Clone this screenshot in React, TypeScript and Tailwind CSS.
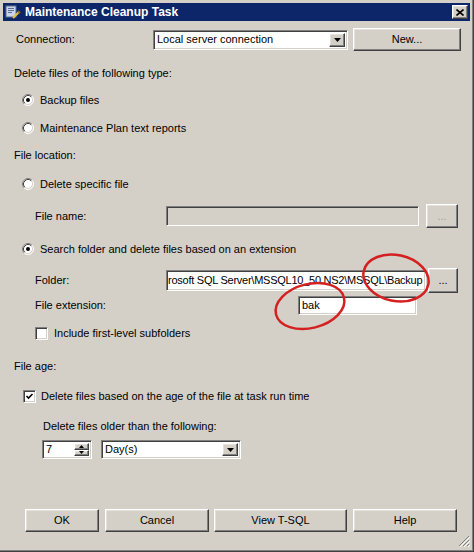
import React from "react";

/* ============================================================
   Maintenance Cleanup Task dialog (Windows classic look)
=============================================================== */

const raised =
  "bg-[#d4d0c8] border border-t-white border-l-white border-r-[#404040] border-b-[#404040] shadow-[inset_-1px_-1px_0_#808080,inset_1px_1px_0_#e4e2dc]";
const sunken =
  "border border-t-[#808080] border-l-[#808080] border-r-white border-b-white shadow-[inset_1px_1px_0_#404040,inset_-1px_-1px_0_#d4d0c8]";

const Radio: React.FC<{ checked?: boolean }> = ({ checked }) => (
  <svg width="12" height="12" viewBox="0 0 12 12" className="shrink-0">
    <circle cx="6" cy="6" r="5" fill="#fff" />
    <path d="M2.11 9.89 A5.5 5.5 0 0 1 9.89 2.11" stroke="#808080" strokeWidth="1" fill="none" />
    <path d="M9.89 2.11 A5.5 5.5 0 0 1 2.11 9.89" stroke="#fff" strokeWidth="1" fill="none" />
    <path d="M2.82 9.18 A4.5 4.5 0 0 1 9.18 2.82" stroke="#404040" strokeWidth="1" fill="none" />
    <path d="M9.18 2.82 A4.5 4.5 0 0 1 2.82 9.18" stroke="#d4d0c8" strokeWidth="1" fill="none" />
    {checked && <circle cx="6" cy="6" r="2" fill="#000" />}
  </svg>
);

const Check: React.FC<{ checked?: boolean }> = ({ checked }) => (
  <div className={`w-[13px] h-[13px] bg-white shrink-0 flex items-center justify-center ${sunken}`}>
    {checked && (
      <svg width="9" height="9" viewBox="0 0 9 9">
        <path d="M1.5 4 L3.5 6 L7.5 2" stroke="#000" strokeWidth="1.6" fill="none" />
      </svg>
    )}
  </div>
);

const Arrow: React.FC = () => (
  <div className={`w-[16px] h-full shrink-0 flex items-center justify-center ${raised}`}>
    <svg width="7" height="4" viewBox="0 0 7 4">
      <path d="M0 0 H7 L3.5 4 Z" fill="#000" />
    </svg>
  </div>
);

const Combo: React.FC<{ value: string; className: string }> = ({ value, className }) => (
  <div className={`bg-white flex items-stretch p-[2px] ${sunken} ${className}`}>
    <div className="flex-1 flex items-center pl-[1px] whitespace-nowrap">{value}</div>
    <Arrow />
  </div>
);

const Btn: React.FC<{ label: string; className: string; disabled?: boolean }> = ({
  label,
  className,
  disabled,
}) => (
  <div
    className={`flex items-center justify-center shrink-0 ${raised} ${className} ${
      disabled ? "text-[#a0a0a0]" : "text-black"
    }`}
  >
    {label}
  </div>
);

export default function App() {
  return (
    <div className="relative w-[474px] h-[552px] bg-[#d4d0c8] overflow-hidden font-['Liberation_Sans',Arial,sans-serif] text-[11px] text-black leading-none shadow-[inset_-1px_-1px_0_#404040,inset_-2px_-2px_0_#808080] flex flex-col">
      {/* ========================== TITLE BAR ============================== */}
      <div className="mx-[3px] mt-[3px] h-[18px] w-[467px] bg-[#0c2669] flex items-center">
        <svg width="16" height="16" viewBox="0 0 16 16" className="ml-[2px] shrink-0">
          <rect x="1" y="2" width="10" height="11" fill="#c8d4e8" stroke="#5a6e96" />
          <rect x="3" y="4" width="6" height="1" fill="#5a6e96" />
          <rect x="3" y="6" width="6" height="1" fill="#5a6e96" />
          <rect x="3" y="8" width="4" height="1" fill="#5a6e96" />
          <path d="M8 14 L14 8" stroke="#e8c040" strokeWidth="2" />
          <path d="M13 7 L15 9" stroke="#8a6a20" strokeWidth="2" />
        </svg>
        <span className="ml-[4px] text-white font-bold text-[12px]">Maintenance Cleanup Task</span>
        <div className={`ml-auto mr-[2px] w-[16px] h-[14px] flex items-center justify-center ${raised}`}>
          <svg width="8" height="7" viewBox="0 0 8 7">
            <path d="M0.5 0.5 L7.5 6.5 M7.5 0.5 L0.5 6.5" stroke="#000" strokeWidth="1.6" />
          </svg>
        </div>
      </div>

      {/* ========================== CONNECTION ============================== */}
      <div className="flex items-center mt-[7px] h-[23px]">
        <div className="ml-[16px] w-[137px]">Connection:</div>
        <Combo value="Local server connection" className="w-[195px] h-[20px]" />
        <Btn label="New..." className="ml-[5px] w-[108px] h-[23px]" />
      </div>

      {/* ========================== FILE TYPE ============================== */}
      <div className="flex items-center mt-[13px] h-[18px] ml-[14px]">Delete files of the following type:</div>
      <div className="flex items-center mt-[9px] h-[18px] ml-[22px] gap-[6px]">
        <Radio checked />
        <span>Backup files</span>
      </div>
      <div className="flex items-center mt-[10px] h-[18px] ml-[22px] gap-[6px]">
        <Radio />
        <span>Maintenance Plan text reports</span>
      </div>

      {/* ========================== FILE LOCATION ============================== */}
      <div className="flex items-center mt-[9px] h-[18px] ml-[14px]">File location:</div>
      <div className="flex items-center mt-[11px] h-[18px] ml-[22px] gap-[6px]">
        <Radio />
        <span>Delete specific file</span>
      </div>
      <div className="flex items-center mt-[11px] h-[24px]">
        <div className="ml-[35px] w-[131px]">File name:</div>
        <div className={`w-[253px] h-[20px] bg-[#d4d0c8] ${sunken}`} />
        <Btn label="..." disabled className="ml-[7px] w-[32px] h-[24px]" />
      </div>
      <div className="flex items-center mt-[12px] h-[18px] ml-[22px] gap-[6px]">
        <Radio checked />
        <span>Search folder and delete files based on an extension</span>
      </div>
      <div className="flex items-center mt-[10px] h-[25px]">
        <div className="ml-[35px] w-[131px]">Folder:</div>
        <div className={`w-[260px] h-[21px] bg-white flex items-center whitespace-nowrap pl-[1px] tracking-[-0.25px] ${sunken}`}>
          rosoft SQL Server\MSSQL10_50.NS2\MSSQL\Backup
        </div>
        <Btn label="..." className="ml-[2px] w-[30px] h-[25px]" />
      </div>
      <div className="flex items-center mt-[3px] h-[19px]">
        <div className="ml-[35px] w-[263px]">File extension:</div>
        <div className={`w-[119px] h-[19px] bg-white flex items-center pl-[3px] ${sunken}`}>bak</div>
      </div>
      <div className="flex items-center mt-[9px] h-[18px] ml-[35px] gap-[6px]">
        <Check />
        <span>Include first-level subfolders</span>
      </div>

      {/* ========================== FILE AGE ============================== */}
      <div className="flex items-center mt-[15px] h-[18px] ml-[14px]">File age:</div>
      <div className="flex items-center mt-[12px] h-[18px] ml-[23px] gap-[5px]">
        <Check checked />
        <span>Delete files based on the age of the file at task run time</span>
      </div>
      <div className="flex items-center mt-[12px] h-[18px] ml-[43px]">Delete files older than the following:</div>
      <div className="flex items-center mt-[5px] h-[19px]">
        <div className={`ml-[42px] w-[50px] h-[19px] bg-white flex items-stretch p-[2px] ${sunken}`}>
          <div className="flex-1 flex items-center pl-[1px]">7</div>
          <div className="w-[15px] flex flex-col">
            <div className={`flex-1 flex items-center justify-center ${raised}`}>
              <svg width="5" height="3" viewBox="0 0 5 3">
                <path d="M0 3 H5 L2.5 0 Z" fill="#000" />
              </svg>
            </div>
            <div className={`flex-1 flex items-center justify-center ${raised}`}>
              <svg width="5" height="3" viewBox="0 0 5 3">
                <path d="M0 0 H5 L2.5 3 Z" fill="#000" />
              </svg>
            </div>
          </div>
        </div>
        <Combo value="Day(s)" className="ml-[9px] w-[140px] h-[19px]" />
      </div>

      {/* ========================== BUTTONS ============================== */}
      <div className="flex items-center mt-[50px] h-[23px]">
        <Btn label="OK" className="ml-[25px] w-[74px] h-[23px]" />
        <Btn label="Cancel" className="ml-[6px] w-[104px] h-[23px]" />
        <Btn label="View T-SQL" className="ml-[5px] w-[133px] h-[23px]" />
        <Btn label="Help" className="ml-[6px] w-[104px] h-[23px]" />
      </div>

      {/* resize grip */}
      <svg width="12" height="12" viewBox="0 0 12 12" className="absolute right-[4px] bottom-[5px]">
        <path d="M11 1 L1 11 M11 5 L5 11 M11 9 L9 11" stroke="#808080" strokeWidth="1" />
        <path d="M12 2 L2 12 M12 6 L6 12 M12 10 L10 12" stroke="#fff" strokeWidth="1" />
      </svg>

      {/* red annotation circles */}
      <svg width="474" height="552" viewBox="0 0 474 552" className="absolute inset-0 pointer-events-none">
        <ellipse cx="396" cy="278" rx="33" ry="23" transform="rotate(12 396 278)" fill="none" stroke="#d42020" strokeWidth="2.5" />
        <ellipse cx="310" cy="306" rx="35" ry="22" transform="rotate(-14 310 306)" fill="none" stroke="#d42020" strokeWidth="2.5" />
      </svg>
    </div>
  );
}
